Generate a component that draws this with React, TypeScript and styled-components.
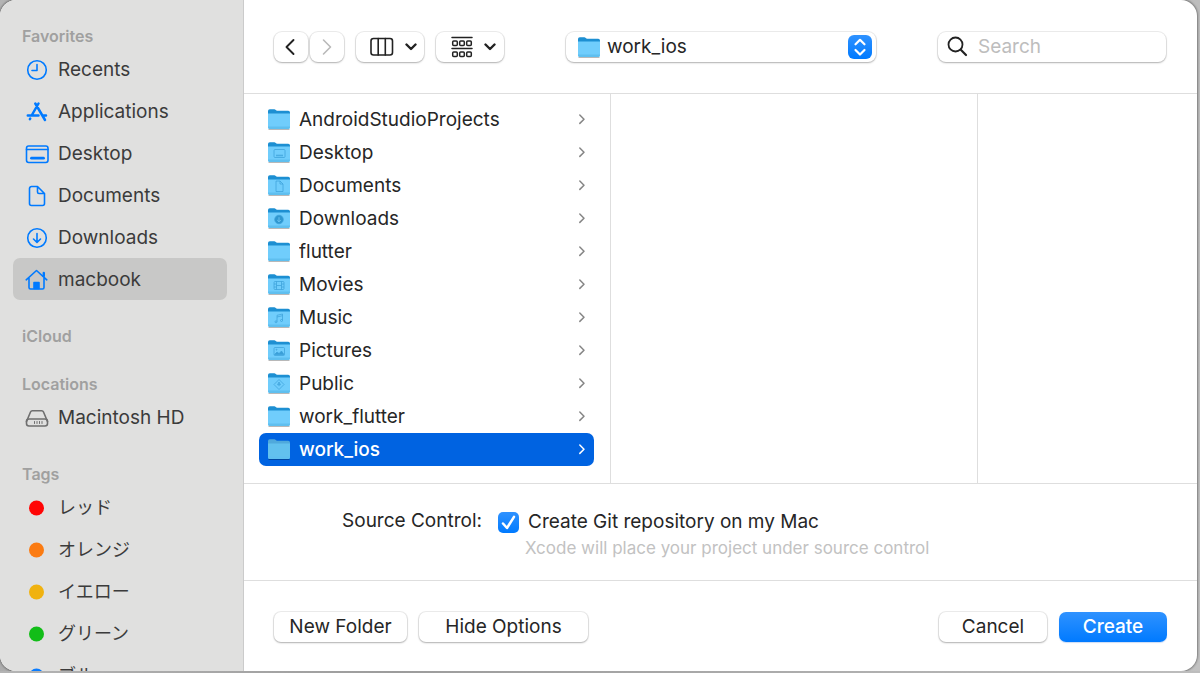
import React, { useState } from "react";
import styled, { createGlobalStyle, css } from "styled-components";

const GlobalStyle = createGlobalStyle`
  *, *::before, *::after { box-sizing: border-box; }
  body {
    margin: 0;
    background: linear-gradient(100deg, #b4b4b4, #9c9c9c 30%, #c2c2c2);
    color: #262626;
    font-family: Inter, "Noto Sans CJK JP", sans-serif;
    font-size: 19px;
    line-height: 24px;
  }
  button, input, select { font: inherit; color: inherit; }
  ul { list-style: none; margin: 0; padding: 0; }
`;

const Sheet = styled.div`
  display: flex;
  height: calc(100vh - 2px);
  min-height: 480px;
  margin-right: 3px;
  border-radius: 16px;
  overflow: hidden;
  background: #fff;
  box-shadow: 0 0 2px 1px rgba(0, 0, 0, 0.35);
`;

const Sidebar = styled.nav`
  flex: none;
  width: 244px;
  padding: 22px 16px 0 13px;
  overflow: hidden;
  background: #e0e0df;
  border-right: 1px solid #cbcbcb;
`;

const Group = styled.section`
  margin-bottom: 22px;
`;

const GroupTitle = styled.h2`
  margin: 0;
  padding: 2px 9px 0;
  font-size: 16px;
  font-weight: 600;
  line-height: 24px;
  color: #a0a0a0;
`;

const Place = styled.button<{ $active?: boolean; $small?: boolean }>`
  display: flex;
  align-items: center;
  gap: 9px;
  width: 100%;
  height: 42px;
  padding: 2px 12px 0;
  border: 0;
  border-radius: 7px;
  background: ${(p) => (p.$active ? "#c8c8c7" : "transparent")};
  color: #3b3b3b;
  text-align: left;
  white-space: nowrap;
  ${(p) => p.$small && css`font-size: 18px;`}
`;

const PlaceIcon = styled.svg`
  flex: none;
  width: 24px;
  height: 24px;
  fill: none;
  stroke: #007aff;
  stroke-width: 1.6;
  stroke-linecap: round;
  stroke-linejoin: round;
`;

const Main = styled.main`
  flex: 1;
  min-width: 0;
  display: flex;
  flex-direction: column;
`;

const Toolbar = styled.header`
  display: flex;
  align-items: center;
  justify-content: space-between;
  height: 94px;
  padding: 0 31px 0 30px;
  border-bottom: 1px solid #dedede;
`;

const Controls = styled.div`
  display: flex;
  gap: 12px;
`;

const Pair = styled.div`
  display: flex;
  gap: 2px;
`;

const raised = css`
  border: 0;
  background: #fff;
  box-shadow: 0 0 0 1px rgba(0, 0, 0, 0.07), 0 1px 2px rgba(0, 0, 0, 0.26);
`;

const ToolButton = styled.button<{ $wide?: boolean }>`
  ${raised}
  display: flex;
  align-items: center;
  justify-content: center;
  gap: 11px;
  width: ${(p) => (p.$wide ? 68 : 34)}px;
  height: 30px;
  padding: ${(p) => (p.$wide ? "0 0 0 6px" : "0")};
  border-radius: 8px;
  svg { fill: none; stroke: #222; stroke-linecap: round; stroke-linejoin: round; }
  &:disabled svg { stroke: #b9b9b9; }
`;

const Popup = styled.div`
  position: relative;
  width: 310px;
`;

const PopupSelect = styled.select`
  ${raised}
  display: block;
  appearance: none;
  width: 100%;
  height: 30px;
  padding: 0 36px 0 41px;
  border-radius: 8px;
  line-height: 24px;
`;

const PopupFolder = styled.span`
  position: absolute;
  left: 11px;
  top: 4px;
  display: flex;
  pointer-events: none;
`;

const Stepper = styled.span`
  position: absolute;
  right: 4px;
  top: 3px;
  display: flex;
  width: 24px;
  height: 24px;
  border-radius: 6px;
  background: linear-gradient(#2f92ff, #007aff);
  pointer-events: none;
`;

const SearchBox = styled.label`
  ${raised}
  display: flex;
  align-items: center;
  gap: 10px;
  width: 228px;
  height: 30px;
  padding: 0 9px;
  border-radius: 8px;
`;

const SearchInput = styled.input`
  flex: 1;
  min-width: 0;
  padding: 0;
  border: 0;
  outline: 0;
  background: none;
  &::placeholder { color: #bdbdbd; opacity: 1; }
`;

const Browser = styled.div`
  flex: 1;
  min-height: 0;
  display: flex;
  border-bottom: 1px solid #dedede;
`;

const Column = styled.div`
  flex: 0 1 367px;
  min-width: 0;
  padding: 9px 16px 0 15px;
  overflow: hidden;
  border-right: 1px solid #dedede;
  &:last-child { flex: 1; border-right: 0; }
`;

const FolderRow = styled.button<{ $selected: boolean }>`
  display: flex;
  align-items: center;
  gap: 8px;
  width: 100%;
  height: 33px;
  padding: 0 8px;
  border: 0;
  border-radius: 7px;
  background: ${(p) => (p.$selected ? "#0063e1" : "transparent")};
  color: ${(p) => (p.$selected ? "#fff" : "#262626")};
  font-weight: ${(p) => (p.$selected ? 500 : 400)};
  text-align: left;
  .chevron { stroke: ${(p) => (p.$selected ? "#fff" : "#868686")}; }
`;

const FolderName = styled.span`
  flex: 1;
  min-width: 0;
  overflow: hidden;
  text-overflow: ellipsis;
  white-space: nowrap;
`;

const Options = styled.section`
  display: grid;
  grid-template-columns: 238px 1fr;
  column-gap: 16px;
  row-gap: 2px;
  align-content: start;
  height: 97px;
  padding-top: 25px;
  border-bottom: 1px solid #dedede;
`;

const OptionLabel = styled.span`
  text-align: right;
`;

const CheckLabel = styled.label`
  display: flex;
  align-items: center;
  gap: 9px;
  padding-top: 1px;
`;

const Tick = styled.span`
  position: relative;
  display: flex;
  svg { position: absolute; inset: 0; pointer-events: none; }
`;

const Check = styled.input`
  appearance: none;
  width: 21px;
  height: 21px;
  margin: 0;
  border-radius: 5px;
  box-shadow: inset 0 0 0 1px #c4c4c4;
  &:checked { background: linear-gradient(#2f92ff, #007aff); box-shadow: none; }
`;

const Hint = styled.p`
  grid-column: 2;
  margin: 0;
  padding-left: 27px;
  font-size: 17px;
  color: #c2c2c2;
`;

const Footer = styled.footer`
  display: flex;
  align-items: center;
  gap: 12px;
  height: 90px;
  padding: 1px 30px 0;
`;

const PushButton = styled.button<{ $width: number; $primary?: boolean; $end?: boolean }>`
  ${raised}
  width: ${(p) => p.$width}px;
  height: 30px;
  padding: 0;
  border-radius: 7px;
  white-space: nowrap;
  ${(p) => p.$end && css`margin-left: auto;`}
  ${(p) =>
    p.$primary &&
    css`
      background: linear-gradient(#2f92ff, #007aff);
      box-shadow: 0 1px 1px rgba(0, 80, 200, 0.2);
      color: #fff;
      font-weight: 500;
    `}
`;

const emblems: Record<string, React.ReactNode> = {
  Desktop: <><rect x="7" y="8.5" width="11" height="8" rx="1" /><path d="M9 14.5h7" strokeWidth="1.6" /></>,
  Documents: <path d="M9 7h4l3 3v7.500H9zM13 7v3h3" />,
  Downloads: <><circle cx="12" cy="12.500" r="4.300" fill="#2f97d0" /><path d="M12 10.200v4.400M10.200 13l1.800 1.800 1.800-1.800" stroke="#7fd1fb" /></>,
  Movies: <><rect x="7" y="8.500" width="10" height="8" rx="1" /><path d="M9.500 8.500v8M14.500 8.500v8M9.500 12.500h5M7 11h2.500M7 14h2.500M14.500 11h2.500M14.500 14h2.500" /></>,
  Music: <><path d="M10 15.500V9.300l5.500-1.300v6.300M10 11l5.500-1.300" /><circle cx="9" cy="15.800" r="1" /><circle cx="14.500" cy="14.500" r="1" /></>,
  Pictures: <><rect x="7" y="8.500" width="10.500" height="8" rx="1" /><path d="M7.500 15.500l2.500-2.500 2 1.500 2.500-2.500 2.500 3.500z" fill="#3a9fd8" /><circle cx="9.500" cy="10.700" r=".5" /></>,
  Public: <><path d="M12 7.500l5 5-5 5-5-5z" /><path d="M12 10.200v4M12 10.200l1.500 2.500h-3z" /></>,
};

function Folder({ name = "", muted = false }: { name?: string; muted?: boolean }) {
  return (
    <svg width="24" height="24" viewBox="0 1 24 24" aria-hidden="true">
      <path d="M1.500 22.500h21" stroke="#000" strokeOpacity=".28" />
      <path d="M1 4a1.800 1.800 0 0 1 1.800-1.800h4.500c1.200 0 1.700 1.600 2.900 1.600h11A1.800 1.800 0 0 1 23 5.600V10H1z" fill={muted ? "#4fa9dc" : "#1d8fd2"} />
      <path d="M1 6.500h22v13.800a1.700 1.700 0 0 1-1.700 1.700H2.700A1.700 1.700 0 0 1 1 20.300z" fill={muted ? "#62c1ee" : "#70cdfc"} />
      <path d="M1 19.500h22v.8a1.700 1.700 0 0 1-1.700 1.700H2.700A1.700 1.700 0 0 1 1 20.300z" fill="#5fbfef" />
      <g fill="none" stroke="#3a9fd8" strokeWidth="1" strokeOpacity=".7" transform="translate(0 1)">{emblems[name]}</g>
    </svg>
  );
}

const placeIcons: Record<string, React.ReactNode> = {
  Recents: <><circle cx="12" cy="12" r="9.300" /><path d="M12 6.500v6H7" /></>,
  Applications: <g strokeWidth="2.500"><path d="M13.500 3.500L7.200 14.500M10.300 3.500L20 20M2.800 15.500h10.700M18 15.500h3M4.900 19.100l.3-.5" /></g>,
  Desktop: <><rect x="1.500" y="4" width="21.500" height="16.500" rx="2.200" /><path d="M1.500 7.500H23" /><path d="M6.500 16.200h12" strokeWidth="2.800" /></>,
  Documents: <path d="M12.500 2.500H6.500a2 2 0 0 0-2 2v15a2 2 0 0 0 2 2h11a2 2 0 0 0 2-2V9.500zM12.500 2.500V8a1.500 1.500 0 0 0 1.500 1.500h5.500" />,
  Downloads: <><circle cx="12" cy="12" r="9.300" /><path d="M12 7.500v8.700M8.500 13l3.500 3.500L15.500 13" /></>,
  macbook: <><path d="M1.200 11.800L11.500 2.500l10.300 9.300M4 10v9.500a1.500 1.500 0 0 0 1.500 1.500h12a1.500 1.500 0 0 0 1.500-1.500V10" /><path d="M18.800 8V5" strokeWidth="2.400" /><path d="M9 20.500v-6h5v6z" fill="#007aff" /></>,
};

const favorites = ["Recents", "Applications", "Desktop", "Documents", "Downloads", "macbook"];
const tags = [
  ["レッド", "#ff0505"],
  ["オレンジ", "#fb7b12"],
  ["イエロー", "#f0b210"],
  ["グリーン", "#12bd18"],
  ["ブルー", "#0a7cff"],
];
const folders = [
  "AndroidStudioProjects", "Desktop", "Documents", "Downloads", "flutter", "Movies",
  "Music", "Pictures", "Public", "work_flutter", "work_ios",
];

const ArrowDown = () => (
  <svg width="12" height="8" viewBox="0 0 12 8" aria-hidden="true">
    <path d="M1.500 1.500L6 6l4.500-4.500" strokeWidth="2.400" />
  </svg>
);

export default function App() {
  const [place, setPlace] = useState("macbook");
  const [folder, setFolder] = useState("work_ios");
  const [git, setGit] = useState(true);

  return (
    <>
      <GlobalStyle />
      <Sheet>
        <Sidebar aria-label="Places">
          <Group>
            <GroupTitle>Favorites</GroupTitle>
            {favorites.map((name) => (
              <Place key={name} $active={place === name} onClick={() => setPlace(name)}>
                <PlaceIcon viewBox="0 0 24 24" aria-hidden="true">{placeIcons[name]}</PlaceIcon>
                {name}
              </Place>
            ))}
          </Group>
          <Group>
            <GroupTitle>iCloud</GroupTitle>
          </Group>
          <Group>
            <GroupTitle>Locations</GroupTitle>
            <Place>
              <PlaceIcon viewBox="0 0 24 24" aria-hidden="true">
                <g stroke="#6f6f6f">
                  <path d="M1.500 15.500L5.500 6a2 2 0 0 1 1.800-1.200h9.400A2 2 0 0 1 18.500 6l4 9.500" />
                  <rect x="1.500" y="13" width="21" height="7" rx="2.500" />
                  <path d="M9.500 15.500v2M12 15.500v2M14.500 15.500v2M17 15.500v2" strokeWidth="1" />
                </g>
              </PlaceIcon>
              Macintosh HD
            </Place>
          </Group>
          <Group>
            <GroupTitle>Tags</GroupTitle>
            {tags.map(([name, color]) => (
              <Place key={name} $small>
                <PlaceIcon viewBox="0 0 24 24" aria-hidden="true">
                  <circle cx="11.500" cy="12" r="7.500" fill={color} stroke="none" />
                </PlaceIcon>
                {name}
              </Place>
            ))}
          </Group>
        </Sidebar>

        <Main>
          <Toolbar>
            <Controls>
              <Pair>
                <ToolButton aria-label="Back">
                  <svg width="12" height="18" viewBox="1 0 12 18"><path d="M9.500 2L2.500 9l7 7" strokeWidth="1.900" /></svg>
                </ToolButton>
                <ToolButton aria-label="Forward" disabled>
                  <svg width="12" height="18" viewBox="0 0 12 18"><path d="M2.500 2l7 7-7 7" strokeWidth="1.600" /></svg>
                </ToolButton>
              </Pair>
              <ToolButton $wide aria-label="View as columns">
                <svg width="24" height="20" viewBox="0 0 24 20">
                  <rect x="1" y="1.500" width="21.500" height="16.500" rx="2.500" strokeWidth="1.600" />
                  <path d="M8.200 1.500V18M15.300 1.500V18" strokeWidth="1.600" />
                </svg>
                <ArrowDown />
              </ToolButton>
              <ToolButton $wide aria-label="Group items">
                <svg width="22" height="22" viewBox="0 0 22 22">
                  <path d="M1 1.500h20M1 12.500h20" strokeWidth="1.500" />
                  {[1.7, 8.7, 15.7].map((x) => (
                    <g key={x} strokeWidth="1.500">
                      <rect x={x} y="4.900" width="4.600" height="4.600" rx="1" />
                      <rect x={x} y="15.900" width="4.600" height="4.600" rx="1" />
                    </g>
                  ))}
                </svg>
                <ArrowDown />
              </ToolButton>
            </Controls>
            <Popup>
              <PopupSelect aria-label="Location" value={folder} onChange={(e) => setFolder(e.target.value)}>
                {folders.map((name) => <option key={name}>{name}</option>)}
              </PopupSelect>
              <PopupFolder><Folder /></PopupFolder>
              <Stepper>
                <svg width="24" height="24" viewBox="0 0 24 24" fill="none" stroke="#fff" strokeWidth="2.200" strokeLinecap="round" strokeLinejoin="round">
                  <path d="M7.500 9.300L12 4.800l4.500 4.500M7.500 15l4.500 4.500 4.500-4.500" />
                </svg>
              </Stepper>
            </Popup>
            <SearchBox>
              <svg width="21" height="21" viewBox="0 0 21 21" fill="none" stroke="#222" strokeLinecap="round" aria-hidden="true">
                <circle cx="8.500" cy="8.500" r="7" strokeWidth="1.800" />
                <path d="M13.800 13.800l5.200 5.200" strokeWidth="2.200" />
              </svg>
              <SearchInput aria-label="Search" placeholder="Search" />
            </SearchBox>
          </Toolbar>

          <Browser>
            <Column>
              <ul>
                {folders.map((name) => (
                  <li key={name}>
                    <FolderRow $selected={folder === name} onClick={() => setFolder(name)}>
                      <Folder name={name} muted={folder === name} />
                      <FolderName>{name}</FolderName>
                      <svg className="chevron" width="8" height="14" viewBox="0 0 8 14" fill="none" strokeWidth="1.500" strokeLinecap="round" strokeLinejoin="round" aria-hidden="true">
                        <path d="M1.800 2l4.200 4.200-4.200 4.200" />
                      </svg>
                    </FolderRow>
                  </li>
                ))}
              </ul>
            </Column>
            <Column />
            <Column />
          </Browser>

          <Options>
            <OptionLabel>Source Control:</OptionLabel>
            <CheckLabel>
              <Tick>
                <Check type="checkbox" checked={git} onChange={(e) => setGit(e.target.checked)} />
                {git && (
                  <svg width="21" height="21" viewBox="0 0 21 21" fill="none" stroke="#fff" strokeWidth="2.500" strokeLinecap="round" strokeLinejoin="round" aria-hidden="true">
                    <path d="M5 11.500l4 4.500 7-11.200" />
                  </svg>
                )}
              </Tick>
              Create Git repository on my Mac
            </CheckLabel>
            <Hint>Xcode will place your project under source control</Hint>
          </Options>

          <Footer>
            <PushButton $width={133}>New Folder</PushButton>
            <PushButton $width={169}>Hide Options</PushButton>
            <PushButton $width={108} $end>Cancel</PushButton>
            <PushButton $width={108} $primary>Create</PushButton>
          </Footer>
        </Main>
      </Sheet>
    </>
  );
}
